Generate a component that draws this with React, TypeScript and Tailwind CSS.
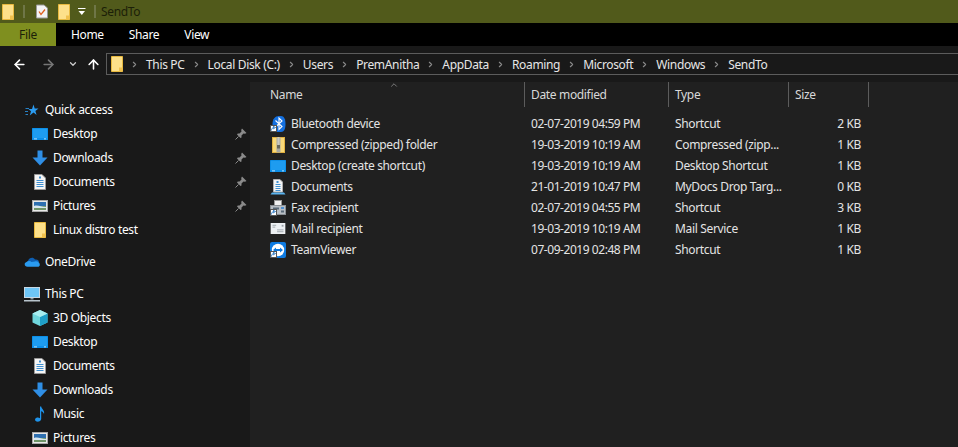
import { ArrowLeft, ArrowRight, ArrowUp, ChevronDown, ChevronRight } from "lucide-react"

const font = "font-['Noto_Sans',sans-serif] text-[12px] leading-none tracking-[-0.34px]"

function Folder({ className = "w-[12px] h-[16px]" }: { className?: string }) {
  return (
    <svg viewBox="0 0 12 16" className={className}>
      <path d="M0.5 0.5H11.5V15.5H0.5Z" fill="#fde08a" stroke="#e8b93f" />
      <path d="M8 15.5V11.5H11.5V15.5Z" fill="#f0c14e" />
    </svg>
  )
}

function DesktopIcon() {
  return (
    <svg viewBox="0 0 16 12" className="w-[16px] h-[12px]">
      <rect width="16" height="12" rx="0.5" fill="#0c8fe8" />
      <rect x="1" y="1" width="14" height="9" fill="#1e9cf0" />
      <rect x="2" y="10.5" width="3" height="0.8" fill="#dff2ff" />
      <rect x="12" y="10.5" width="2" height="0.8" fill="#dff2ff" />
    </svg>
  )
}

function DownloadIcon() {
  return (
    <svg viewBox="0 0 16 16" className="w-[16px] h-[16px]">
      <path d="M5.5 0.5H10.5V7.5H15.5L8 15.5L0.5 7.5H5.5Z" fill="#2f8fe6" />
    </svg>
  )
}

function DocIcon() {
  return (
    <svg viewBox="0 0 12 16" className="w-[12px] h-[16px]">
      <path d="M0.5 0.5H8L11.5 4V15.5H0.5Z" fill="#f5f5f5" stroke="#9a9a9a" />
      <path d="M2.5 6.5H9.5M2.5 8.5H9.5M2.5 10.5H9.5M2.5 12.5H9.5" stroke="#3f8fd0" />
      <path d="M5 2.5H7V4.5H5Z" fill="#3f8fd0" />
    </svg>
  )
}

function PictureIcon() {
  return (
    <svg viewBox="0 0 16 12" className="w-[16px] h-[12px]">
      <rect x="0.5" y="0.5" width="15" height="11" fill="#e8e8e8" stroke="#a8a8a8" />
      <rect x="2" y="2" width="12" height="4" fill="#2e6fb0" />
      <rect x="2" y="6" width="12" height="4" fill="#6f9468" />
      <path d="M2 6C6 4.5 9 7 14 7V8H2Z" fill="#d6e6ef" />
    </svg>
  )
}

function Pin() {
  return (
    <svg viewBox="0 0 12 12" className="w-[12px] h-[12px]">
      <path d="M7 0.5L11.5 5L10 5.8L8.5 5.5L6.5 7.5L6.5 9.5L5.5 10L2 6.5L2.8 5.5H4.5L6.5 3.5L6.2 2Z" fill="#8a8a8a" />
      <path d="M3.5 8.5L0.5 11.5" stroke="#8a8a8a" />
    </svg>
  )
}

function QuickStar() {
  return (
    <svg viewBox="0 0 14 13" className="w-[14px] h-[13px]">
      <path d="M8.5 0.5L9.7 4.4H13.5L10.4 6.9L11.6 11L8.5 8.5L4.8 11.5L6 7.2L3.5 5H7Z" fill="#2b9bf0" />
      <path d="M0.5 4.5H4M0 7.5H3M0.5 10.5H3" stroke="#2b9bf0" strokeWidth="0.8" />
    </svg>
  )
}

function Cloud() {
  return (
    <svg viewBox="0 0 16 10" className="w-[16px] h-[10px]">
      <path d="M4 4C5 1 9 -0.5 11 2.5C13.5 2 15 3.5 15 5L6 8L3 5Z" fill="#0d5fb3" />
      <path d="M3.5 9.8C0.5 9.8 -0.5 6 2.5 5C4 3.5 6.5 3.5 7.5 5L11 4.5C13.5 3.8 16.5 6 15.7 8.5C15.4 9.5 14.5 9.8 14 9.8Z" fill="#2a9bf0" />
    </svg>
  )
}

function PcIcon() {
  return (
    <svg viewBox="0 0 16 15" className="w-[16px] h-[15px]">
      <rect x="0.5" y="0.5" width="15" height="10" fill="#6ec6f7" stroke="#c8d8e4" />
      <rect x="6.5" y="11" width="3" height="1.5" fill="#8a9aa6" />
      <rect x="0" y="13" width="16" height="1.5" fill="#b8c4cc" />
    </svg>
  )
}

function CubeIcon() {
  return (
    <svg viewBox="0 0 16 16" className="w-[16px] h-[16px]">
      <path d="M8 0L15.5 3.5V12.5L8 16L0.5 12.5V3.5Z" fill="#6fd6dc" />
      <path d="M8 7L15.5 3.5V12.5L8 16Z" fill="#1f9fc8" />
      <path d="M8 0L15.5 3.5L8 7L0.5 3.5Z" fill="#a8eef0" />
    </svg>
  )
}

function MusicIcon() {
  return (
    <svg viewBox="0 0 12 16" className="w-[12px] h-[16px]">
      <path d="M6 0.5H7.2C7.6 3 11 4.5 10 8C9.5 6.5 8.5 5.5 7.2 5.2V13C7.2 15 4.5 16 2.5 15.5C0.5 15 0.5 12.5 2.5 11.8C3.6 11.4 5 11.6 6 12.2Z" fill="#1e93ea" />
    </svg>
  )
}

function ShortcutBadge() {
  return (
    <span className="absolute bottom-0 left-0 w-[7px] h-[7px] bg-white border border-[#555] flex items-center justify-center">
      <svg viewBox="0 0 5 5" className="w-[5px] h-[5px]">
        <path d="M0.5 4.5C0.5 2.5 1.5 1.5 3 1.5M2 0.2L4.5 1.5L2 3" stroke="#1e6fc0" fill="none" strokeWidth="0.9" />
      </svg>
    </span>
  )
}

function BluetoothIcon() {
  return (
    <span className="relative w-[16px] h-[16px] block">
      <svg viewBox="0 0 16 16" className="w-[16px] h-[16px]">
        <path d="M9 0H11C14 0 15.5 3 15.5 8C15.5 13 14 16 11 16H7C3 16 2.5 12 2.5 8C2.5 3 5 0 9 0Z" fill="#1470e0" />
        <path d="M5.5 4.5L12 10.5L9 13.5V2L12 5L5.5 11" stroke="#fff" strokeWidth="1.1" fill="none" />
      </svg>
      <ShortcutBadge />
    </span>
  )
}

function ZipIcon() {
  return (
    <svg viewBox="0 0 13 16" className="w-[13px] h-[16px]">
      <rect x="0.5" y="0.5" width="12" height="15" fill="#f8d878" stroke="#e0b040" />
      <rect x="4.5" y="0.5" width="4" height="15" fill="#a8a8a0" />
      <path d="M5.5 1H7.5M5.5 3H7.5M5.5 5H7.5M5.5 7H7.5" stroke="#e8e8e0" />
      <rect x="5" y="8" width="3" height="3.5" fill="#66665c" />
    </svg>
  )
}

function DocShare() {
  return (
    <svg viewBox="0 0 16 16" className="w-[16px] h-[16px]">
      <path d="M3.5 0.5H10L12.5 3V13H3.5Z" fill="#f5f5f5" stroke="#b0b0b0" />
      <path d="M5.5 5.5H10.5M5.5 7.5H10.5M5.5 9.5H10.5M5.5 11.5H10.5" stroke="#3f8fd0" />
      <path d="M6.5 2H8.5V4H6.5Z" fill="#3f8fd0" />
      <path d="M2 13.5H14L15.5 15.5H0.5Z" fill="#5ab4f0" />
    </svg>
  )
}

function FaxIcon() {
  return (
    <span className="relative w-[16px] h-[16px] block">
      <svg viewBox="0 0 16 16" className="w-[16px] h-[16px]">
        <rect x="4.5" y="0.5" width="7" height="5" fill="#f0f0f0" stroke="#999" />
        <rect x="0.5" y="5.5" width="15" height="9" fill="#b8bec4" stroke="#8a8f94" />
        <rect x="3" y="7.5" width="6" height="2" fill="#5a6a78" />
        <rect x="11" y="7" width="3" height="2" fill="#4f8fd0" />
        <rect x="11" y="10.5" width="3" height="2" fill="#5a6a78" />
      </svg>
      <ShortcutBadge />
    </span>
  )
}

function MailIcon() {
  return (
    <svg viewBox="0 0 16 12" className="w-[16px] h-[11px]">
      <rect width="16" height="12" fill="#eceff2" />
      <path d="M2 2.5H6M2 4.5H5M7 7.5H14M7 9.5H14" stroke="#9aa2a8" />
      <rect x="12" y="2" width="2" height="2" fill="#9aa2a8" />
    </svg>
  )
}

function TeamViewerIcon() {
  return (
    <span className="relative w-[16px] h-[16px] block">
      <svg viewBox="0 0 16 16" className="w-[16px] h-[16px]">
        <rect width="16" height="16" rx="2" fill="#0e7ae0" />
        <circle cx="8" cy="8" r="6.2" fill="#fff" />
        <path d="M3 8L6 5.5V7H10V5.5L13 8L10 10.5V9H6V10.5Z" fill="#0e7ae0" />
      </svg>
      <ShortcutBadge />
    </span>
  )
}

function NavRow({ icon, label, pinned }: { icon: React.ReactNode; label: string; pinned?: boolean }) {
  return (
    <div className="flex items-center h-[24px] pl-[32px] pr-[3px]">
      <span className="w-[16px] flex justify-center items-center">{icon}</span>
      <span className="ml-[5px] flex-1">{label}</span>
      {pinned && <Pin />}
    </div>
  )
}

function NavHead({ icon, label }: { icon: React.ReactNode; label: string }) {
  return (
    <div className="flex items-center h-[24px] pl-[24px]">
      <span className="w-[16px] flex justify-center items-center">{icon}</span>
      <span className="ml-[5px]">{label}</span>
    </div>
  )
}

const crumbs = ["This PC", "Local Disk (C:)", "Users", "PremAnitha", "AppData", "Roaming", "Microsoft", "Windows", "SendTo"]

const files = [
  { icon: <BluetoothIcon />, name: "Bluetooth device", date: "02-07-2019 04:59 PM", type: "Shortcut", size: "2 KB" },
  { icon: <ZipIcon />, name: "Compressed (zipped) folder", date: "19-03-2019 10:19 AM", type: "Compressed (zipp...", size: "1 KB" },
  { icon: <DesktopIcon />, name: "Desktop (create shortcut)", date: "19-03-2019 10:19 AM", type: "Desktop Shortcut", size: "1 KB" },
  { icon: <DocShare />, name: "Documents", date: "21-01-2019 10:47 PM", type: "MyDocs Drop Targ...", size: "0 KB" },
  { icon: <FaxIcon />, name: "Fax recipient", date: "02-07-2019 04:55 PM", type: "Shortcut", size: "3 KB" },
  { icon: <MailIcon />, name: "Mail recipient", date: "19-03-2019 10:19 AM", type: "Mail Service", size: "1 KB" },
  { icon: <TeamViewerIcon />, name: "TeamViewer", date: "07-09-2019 02:48 PM", type: "Shortcut", size: "1 KB" },
]

export default function App() {
  return (
    <div className={`${font} w-[958px] h-[447px] overflow-hidden flex flex-col bg-[#191919] text-white`}>
      {/* title bar */}
      <div className="h-[23px] bg-[#515a1b] flex items-center pl-[2px] shrink-0">
        <Folder />
        <span className="ml-[9px] w-[2px] h-[13px] border-x border-[#6f7647] bg-[#3f4612]" />
        <svg viewBox="0 0 12 14" className="ml-[11px] w-[12px] h-[15px]">
          <path d="M0.5 0.5H8L11.5 3.5V13.5H0.5Z" fill="#f4f4f4" stroke="#999" />
          <path d="M3 7L5 10L9 5" stroke="#e06020" strokeWidth="1.3" fill="none" />
        </svg>
        <Folder className="ml-[10px] w-[12px] h-[16px]" />
        <svg viewBox="0 0 8 8" className="ml-[8px] w-[8px] h-[8px]">
          <path d="M0 0.5H7.5" stroke="#fff" />
          <path d="M0.5 3H7L3.8 7Z" fill="#fff" />
        </svg>
        <span className="ml-[8px] w-[2px] h-[13px] border-x border-[#6f7647] bg-[#3f4612]" />
        <span className="ml-[5px] text-[#1c1f08]">SendTo</span>
      </div>

      {/* ribbon tabs */}
      <div className="h-[23px] bg-black flex items-center shrink-0">
        <span className="w-[56px] h-full bg-[#7f8f1f] flex items-center justify-center pt-[1px] text-[#1c1f08]">File</span>
        <span className="ml-[15px] pt-[1px]">Home</span>
        <span className="ml-[25px] pt-[1px]">Share</span>
        <span className="ml-[25px] pt-[1px]">View</span>
      </div>

      {/* address bar */}
      <div className="h-[36px] flex items-center shrink-0">
        <ArrowLeft size={15} strokeWidth={2.5} className="ml-[12px]" />
        <ArrowRight size={15} strokeWidth={2.5} className="ml-[14px] text-[#777]" />
        <ChevronDown size={10} strokeWidth={3} className="ml-[12px] text-[#ccc]" />
        <ArrowUp size={15} strokeWidth={2.5} className="ml-[8px]" />
        <div className="ml-[5px] flex-1 h-[22px] border-y border-l border-[#5c5c5c] flex items-center pl-[4px]">
          <Folder />
          {crumbs.map((c) => (
            <span key={c} className="flex items-center">
              <ChevronRight size={9} strokeWidth={3} className="mx-[7px] text-[#8a8a8a]" />
              <span className="pt-[1px] text-[#e6e6e6]">{c}</span>
            </span>
          ))}
        </div>
      </div>

      <div className="flex flex-1 min-h-0">
        {/* nav pane */}
        <div className="w-[250px] pt-[16px] shrink-0 overflow-hidden">
          <NavHead icon={<QuickStar />} label="Quick access" />
          <NavRow icon={<DesktopIcon />} label="Desktop" pinned />
          <NavRow icon={<DownloadIcon />} label="Downloads" pinned />
          <NavRow icon={<DocIcon />} label="Documents" pinned />
          <NavRow icon={<PictureIcon />} label="Pictures" pinned />
          <NavRow icon={<Folder />} label="Linux distro test" />
          <div className="h-[8px]" />
          <NavHead icon={<Cloud />} label="OneDrive" />
          <div className="h-[8px]" />
          <NavHead icon={<PcIcon />} label="This PC" />
          <NavRow icon={<CubeIcon />} label="3D Objects" />
          <NavRow icon={<DesktopIcon />} label="Desktop" />
          <NavRow icon={<DocIcon />} label="Documents" />
          <NavRow icon={<DownloadIcon />} label="Downloads" />
          <NavRow icon={<MusicIcon />} label="Music" />
          <NavRow icon={<PictureIcon />} label="Pictures" />
        </div>

        {/* file list */}
        <div className="flex-1 bg-[#202020] relative">
          <ChevronDown size={10} className="absolute left-[139px] -top-[2px] rotate-180 text-[#8a8a8a]" />
          <div className="flex h-[25px] text-[#d8d8d8]">
            <div className="w-[275px] pl-[20px] pt-[1px] flex items-center border-r border-[#5c5c5c]">Name</div>
            <div className="w-[144px] pl-[6px] pt-[1px] flex items-center border-r border-[#5c5c5c]">Date modified</div>
            <div className="w-[120px] pl-[6px] pt-[1px] flex items-center border-r border-[#5c5c5c]">Type</div>
            <div className="w-[80px] pl-[6px] pt-[1px] flex items-center border-r border-[#5c5c5c]">Size</div>
          </div>
          <div className="pt-[6px]">
            {files.map((f) => (
              <div key={f.name} className="flex items-center h-[21px] text-[#e4e4e4]">
                <div className="w-[275px] pl-[20px] flex items-center">
                  <span className="w-[16px] flex justify-center items-center">{f.icon}</span>
                  <span className="ml-[5px] pt-[1px]">{f.name}</span>
                </div>
                <div className="w-[144px] pl-[6px] pt-[1px] tracking-[-0.45px]">{f.date}</div>
                <div className="w-[120px] pl-[6px] pt-[1px]">{f.type}</div>
                <div className="w-[72px] text-right pt-[1px]">{f.size}</div>
              </div>
            ))}
          </div>
        </div>
      </div>
    </div>
  )
}
